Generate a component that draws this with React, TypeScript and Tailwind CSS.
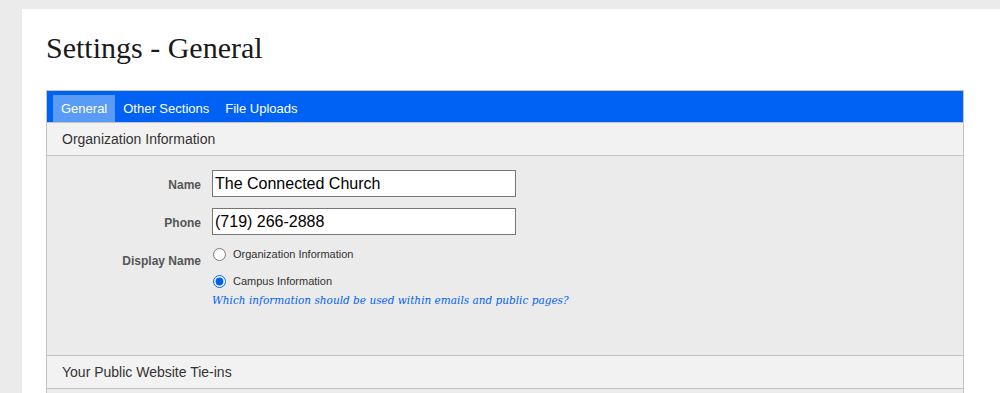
import { useState } from 'react'

const SANS = { fontFamily: '"Liberation Sans", Arial, sans-serif' }

const TABS = ['General', 'Other Sections', 'File Uploads']

function SectionHeader({ children }: { children: string }) {
  return (
    <div className="h-[33px] flex items-center px-[15px] bg-[#f2f2f2] border-b border-[#c4c4c4] text-[14px] text-[#333]">
      {children}
    </div>
  )
}

function Field({ label, children }: { label: string; children: React.ReactNode }) {
  return (
    <div className="flex">
      <div className="w-[165px] shrink-0 pr-[11px] pt-[6px] text-right text-[12px] font-bold text-[#555]">
        {label}
      </div>
      <div>{children}</div>
    </div>
  )
}

export default function App() {
  const [name, setName] = useState('The Connected Church')
  const [phone, setPhone] = useState('(719) 266-2888')
  const [display, setDisplay] = useState<'org' | 'campus'>('campus')

  return (
    <div className="h-[393px] overflow-hidden bg-[#ebebeb] pt-[9px] pl-[22px]" style={SANS}>
      <div className="h-full bg-white pl-[24px] pr-[36px]">
        <h1
          className="pt-[19px] pb-[22px] text-[30px] leading-[40px] text-[#1a1a1a]"
          style={{ fontFamily: '"Liberation Serif", Georgia, serif' }}
        >
          Settings - General
        </h1>

        <div className="border border-[#c4c4c4]">
          <div className="h-[32px] bg-[#0062f5] flex items-end px-[6px] border-b border-[#c4c4c4]">
            {TABS.map((t, i) => (
              <div
                key={t}
                className={`h-[27px] flex items-center px-[8px] text-[13px] text-white ${
                  i === 0 ? 'bg-[#5a9bf6]' : ''
                }`}
              >
                {t}
              </div>
            ))}
          </div>

          <SectionHeader>Organization Information</SectionHeader>

          <div className="h-[200px] bg-[#ebebeb] border-b border-[#c4c4c4] pt-[14px] flex flex-col gap-[11px]">
            <Field label="Name">
              <input
                value={name}
                onChange={(e) => setName(e.target.value)}
                className="w-[304px] h-[27px] bg-white border border-[#767676] px-[2px] text-[16px] text-black outline-none"
              />
            </Field>
            <Field label="Phone">
              <input
                value={phone}
                onChange={(e) => setPhone(e.target.value)}
                className="w-[304px] h-[27px] bg-white border border-[#767676] px-[2px] text-[16px] text-black outline-none"
              />
            </Field>
            <Field label="Display Name">
              <div className="flex flex-col">
                <label className="flex items-center gap-[7px] h-[13px] mt-[2px] text-[11px] text-[#333]">
                  <input
                    type="radio"
                    name="display"
                    checked={display === 'org'}
                    onChange={() => setDisplay('org')}
                    className="w-[13px] h-[13px] m-0 ml-[1px] accent-[#0062f5]"
                  />
                  Organization Information
                </label>
                <label className="flex items-center gap-[7px] h-[13px] mt-[14px] text-[11px] text-[#333]">
                  <input
                    type="radio"
                    name="display"
                    checked={display === 'campus'}
                    onChange={() => setDisplay('campus')}
                    className="w-[13px] h-[13px] m-0 ml-[1px] accent-[#0062f5]"
                  />
                  Campus Information
                </label>
                <p
                  className="mt-[5px] text-[10.5px] italic text-[#0062f5]"
                  style={{ fontFamily: '"DejaVu Serif", Georgia, serif' }}
                >
                  Which information should be used within emails and public pages?
                </p>
              </div>
            </Field>
          </div>

          <SectionHeader>Your Public Website Tie-ins</SectionHeader>
          <div className="h-[40px] bg-[#ebebeb]" />
        </div>
      </div>
    </div>
  )
}
